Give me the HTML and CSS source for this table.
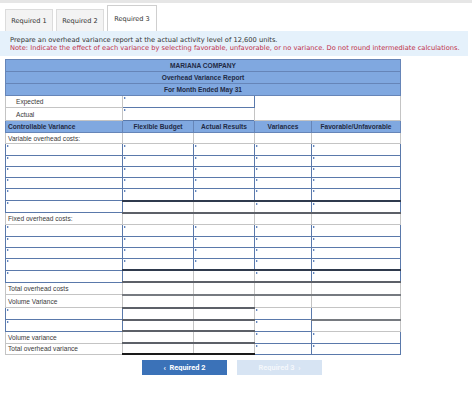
FILE: index.html
```html
<!DOCTYPE html>
<html>
<head>
<meta charset="utf-8">
<link rel="stylesheet" href="styles.css">
</head>
<body>
<div class="topbar"></div>
<div class="tabs">
  <div class="tab">Required 1</div>
  <div class="tab">Required 2</div>
  <div class="tab active">Required 3</div>
</div>
<div class="panel">
  <p class="q">Prepare an overhead variance report at the actual activity level of 12,600 units.</p>
  <p class="note">Note: Indicate the effect of each variance by selecting favorable, unfavorable, or no variance. Do not round intermediate calculations.</p>
</div>
<table class="rep">
  <colgroup>
    <col class="c1"><col class="c2"><col class="c3"><col class="c4"><col class="c5">
  </colgroup>
  <tr class="hd"><td colspan="5">MARIANA COMPANY</td></tr>
  <tr class="hd"><td colspan="5">Overhead Variance Report</td></tr>
  <tr class="hd"><td colspan="5">For Month Ended May 31</td></tr>
  <tr class="ex"><td class="lbl ind">Expected</td><td class="in" colspan="2"></td><td class="blank" colspan="2" rowspan="2"></td></tr>
  <tr class="ex2"><td class="lbl ind">Actual</td><td class="in" colspan="2"></td></tr>
  <tr class="ch"><td class="left">Controllable Variance</td><td>Flexible Budget</td><td>Actual Results</td><td>Variances</td><td>Favorable/Unfavorable</td></tr>
  <tr><td class="lbl">Variable overhead costs:</td><td></td><td></td><td></td><td></td></tr>
  <tr><td class="in"></td><td class="in"></td><td class="in"></td><td class="in"></td><td class="in"></td></tr>
  <tr><td class="in"></td><td class="in"></td><td class="in"></td><td class="in"></td><td class="in"></td></tr>
  <tr><td class="in"></td><td class="in"></td><td class="in"></td><td class="in"></td><td class="in"></td></tr>
  <tr><td class="in"></td><td class="in"></td><td class="in"></td><td class="in"></td><td class="in"></td></tr>
  <tr class="r12"><td class="in"></td><td class="in"></td><td class="in"></td><td class="in"></td><td class="in"></td></tr>
  <tr class="r12"><td class="in"></td><td class="dt db"></td><td class="dt db"></td><td class="in dt db"></td><td class="in dt db"></td></tr>
  <tr class="r12"><td class="lbl">Fixed overhead costs:</td><td></td><td></td><td></td><td></td></tr>
  <tr><td class="in"></td><td class="in"></td><td class="in"></td><td class="in"></td><td class="in"></td></tr>
  <tr><td class="in"></td><td class="in"></td><td class="in"></td><td class="in"></td><td class="in"></td></tr>
  <tr><td class="in"></td><td class="in"></td><td class="in"></td><td class="in"></td><td class="in"></td></tr>
  <tr><td class="in"></td><td class="in"></td><td class="in"></td><td class="in"></td><td class="in"></td></tr>
  <tr class="r12"><td class="in"></td><td class="dt db"></td><td class="dt db"></td><td class="in dt db"></td><td class="in dt db"></td></tr>
  <tr class="r13"><td class="lbl">Total overhead costs</td><td class="mb"></td><td class="mb"></td><td class="mb"></td><td class="mb"></td></tr>
  <tr class="r13"><td class="lbl">Volume Variance</td><td class="db"></td><td class="db"></td><td></td><td></td></tr>
  <tr class="r12"><td class="in"></td><td class="db"></td><td class="db"></td><td class="in"></td><td class="mb"></td></tr>
  <tr><td class="in"></td><td class="db"></td><td class="db"></td><td class="in"></td><td></td></tr>
  <tr class="r12"><td class="lbl">Volume variance</td><td class="db"></td><td class="db"></td><td class="in"></td><td class="in"></td></tr>
  <tr><td class="lbl">Total overhead variance</td><td class="bb"></td><td class="bb"></td><td class="in"></td><td class="in"></td></tr>
</table>
<div class="nav">
  <div class="btn prev">&lsaquo;&nbsp;&nbsp;Required 2</div>
  <div class="btn next">Required 3&nbsp;&nbsp;&rsaquo;</div>
</div>
</body>
</html>
```

FILE: styles.css
```css
* { box-sizing: border-box; }
html, body { margin: 0; padding: 0; background: #fff; }
body { width: 474px; height: 397px; overflow: hidden; font-family: "DejaVu Sans", Verdana, sans-serif; }

.topbar { height: 3px; background: #e6e6e6; width: 472px; }

.tabs { display: flex; gap: 3px; padding-left: 5px; margin-top: 2px; align-items: flex-end; height: 26px; }
.tab {
  width: 48px; height: 22px; background: #f3f3f3; border: 1px solid #dcdcdc; border-bottom: none;
  font-size: 6.6px; color: #333; display: flex; align-items: center; justify-content: center;
}
.tab.active { width: 50px; height: 26px; background: #fff; border-color: #cfcfcf; }

.panel { background: #e5f1fb; width: 468px; height: 25px; padding: 5px 10px 0; }
.panel p { margin: 0; font-size: 6.7px; line-height: 8px; white-space: nowrap; }
.q { color: #333; }
.note { color: #c0304a; }

.rep {
  border-collapse: collapse; margin: 3px 0 0 5px; width: 395px; table-layout: fixed;
  font-family: "Liberation Sans", Arial, sans-serif; font-size: 6.6px; color: #333;
}
col.c1 { width: 117px; } col.c2 { width: 71px; } col.c3 { width: 61px; } col.c4 { width: 57px; } col.c5 { width: 89px; }
.rep td { border: 1px solid #c4c4c4; height: 11.3px; padding: 0 2px; position: relative; white-space: nowrap; }
.rep tr.r12 td { height: 12px; }
.rep tr.r13 td { height: 12.8px; }

.rep tr.hd td, .rep tr.ch td { background: #80a8e0; border: 1px solid #6685b8; text-align: center; font-weight: bold; color: #1f2a44; height: 12px; }
.rep tr.ch td.left { text-align: left; }
.rep tr.ex td { height: 12px; }
.rep tr.ex2 td { height: 13px; }
.lbl { color: #3a3a3a; }
.ind { padding-left: 10px !important; }
.rep td.blank { border-color: #c4c4c4; }

.rep td.in { border: 1px solid #5a79ab; }
.rep td.in::before {
  content: ""; position: absolute; left: 1px; top: 1px; width: 0; height: 0;
  border-top: 1.5px solid transparent; border-bottom: 1.5px solid transparent; border-left: 2px solid #2f5da6;
}
.rep td.dt { border-top: 2px solid #2f3a4d; }
.rep td.db { border-bottom: 2px solid #5c6068; }
.rep td.mb { border-bottom: 2px solid #767a80; }
.rep td.bb { border-bottom: 2px solid #1a1a1a; }

.nav { display: flex; gap: 10px; padding-left: 142px; margin-top: 5px; }
.btn {
  width: 85px; height: 15px; display: flex; align-items: center; justify-content: center;
  font-family: "Roboto", "Liberation Sans", sans-serif; font-weight: bold; font-size: 7.4px; color: #fff;
}
.prev { background: #3b72b8; }
.next { background: #d7e4f3; color: #f4f7fb; }
```
